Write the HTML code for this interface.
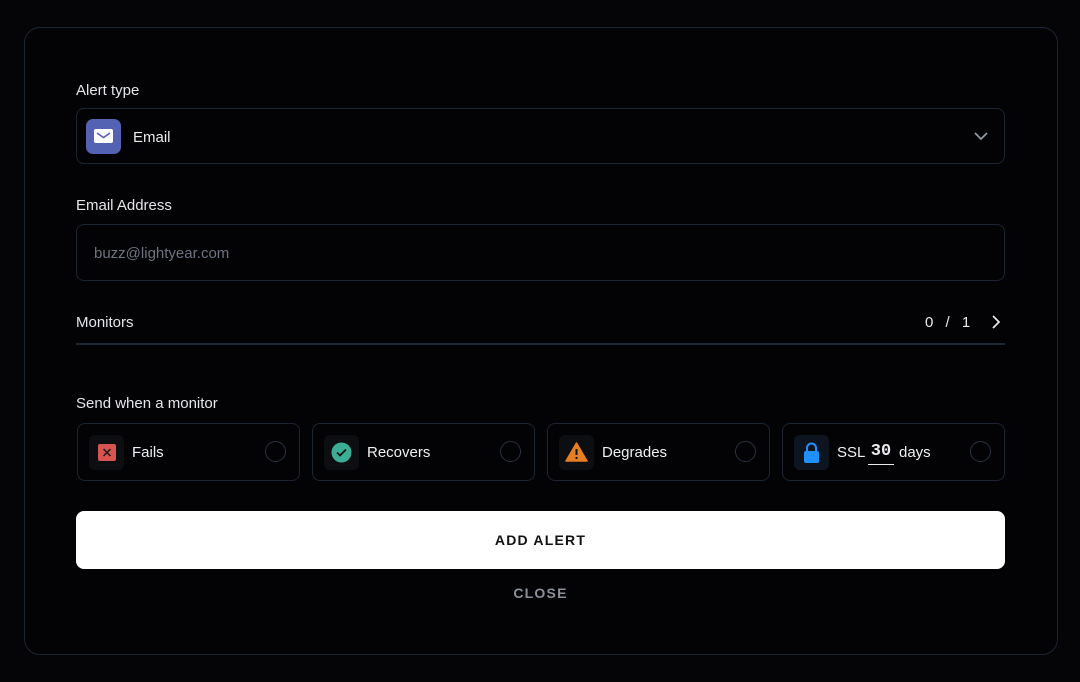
<!DOCTYPE html>
<html><head><style>
*{box-sizing:border-box;margin:0;padding:0}
body{width:1080px;height:682px;background:#050507;font-family:"Liberation Sans",sans-serif;color:#e8eaee;position:relative;overflow:hidden}
.panel{position:absolute;left:24px;top:27px;width:1034px;height:628px;border:1px solid #1c2433;border-radius:16px;background:#030305}
.lbl{position:absolute;left:76px;font-size:15px;color:#e4e6ea}
.box{position:absolute;left:76px;width:929px;border:1px solid #1c2433;border-radius:8px}
.card{position:absolute;top:423px;width:223px;height:58px;border:1px solid #1c2433;border-radius:8px}
.ic{position:absolute;left:11px;top:11px;width:35px;height:35px;border-radius:6px;background:#0c0e12}
.ct{position:absolute;left:54px;top:20px;font-size:15px;color:#eef0f2}
.rad{position:absolute;right:13px;top:17px;width:21px;height:21px;border:1px solid #2a3140;border-radius:50%}
</style></head><body>
<div class="panel"></div>
<div class="lbl" style="top:82px">Alert type</div>
<div class="box" style="top:108px;height:56px">
 <div style="position:absolute;left:9px;top:10px;width:35px;height:35px;border-radius:7px;background:#5462b4">
  <svg width="35" height="35" viewBox="0 0 35 35"><rect x="8" y="10" width="19" height="14" rx="2" fill="#fff"/><path d="M11 14l6.5 4.5L24 14" stroke="#5462b4" stroke-width="1.6" fill="none"/></svg>
 </div>
 <div style="position:absolute;left:56px;top:20px;font-size:15px">Email</div>
 <svg style="position:absolute;right:16px;top:21px" width="14" height="12" viewBox="0 0 14 12"><path d="M1 3l6 6 6-6" stroke="#9aa0aa" stroke-width="1.6" fill="none"/></svg>
</div>
<div class="lbl" style="top:197px">Email Address</div>
<div class="box" style="top:224px;height:57px"><div style="position:absolute;left:17px;top:20px;font-size:15px;color:#6e7380">buzz@lightyear.com</div></div>
<div class="lbl" style="top:314px">Monitors</div>
<div style="position:absolute;left:925px;top:314px;font-size:15px;word-spacing:8px">0 / 1</div>
<svg style="position:absolute;left:990px;top:315px" width="12" height="14" viewBox="0 0 12 14"><path d="M3 1l6 6-6 6" stroke="#e8eaee" stroke-width="1.7" fill="none"/></svg>
<div style="position:absolute;left:76px;top:343px;width:929px;height:2px;background:#1f2735"></div>
<div class="lbl" style="top:395px">Send when a monitor</div>
<div class="card" style="left:77px"><div class="ic"><div style="position:absolute;left:9px;top:9px;width:18px;height:17px;border-radius:2px;background:#d9534f"></div><svg style="position:absolute;left:9px;top:9px" width="18" height="17"><path d="M5.5 5l7 7M12.5 5l-7 7" stroke="#1a1a1a" stroke-width="1.5"/></svg></div><div class="ct">Fails</div><div class="rad"></div></div>
<div class="card" style="left:312px"><div class="ic"><svg style="position:absolute;left:7px;top:7px" width="21" height="21"><circle cx="10.5" cy="10.5" r="10" fill="#3cae96"/><path d="M6 10.5l3 3 6-6" stroke="#111" stroke-width="1.8" fill="none"/></svg></div><div class="ct">Recovers</div><div class="rad"></div></div>
<div class="card" style="left:547px"><div class="ic"><svg style="position:absolute;left:6px;top:6px" width="23" height="22"><path d="M11.5 2L22 20H1z" fill="#e67e22" stroke="#e67e22" stroke-linejoin="round" stroke-width="1.5"/><path d="M11.5 8v6" stroke="#111" stroke-width="2"/><circle cx="11.5" cy="17" r="1.1" fill="#111"/></svg></div><div class="ct">Degrades</div><div class="rad"></div></div>
<div class="card" style="left:782px"><div class="ic" style="background:#0f1520"><svg style="position:absolute;left:8px;top:6px" width="19" height="23"><path d="M5 11V7a4.5 4.5 0 019 0v4" stroke="#1e90ff" stroke-width="2" fill="none"/><rect x="2" y="10" width="15" height="12" rx="2" fill="#1e90ff"/></svg></div>
 <div class="ct">SSL</div>
 <div style="position:absolute;left:85px;top:17px;width:26px;height:24px;border-bottom:1px solid #e8eaee;font-family:'Liberation Mono',monospace;font-weight:bold;font-size:17px;text-align:center;line-height:22px">30</div>
 <div class="ct" style="left:116px">days</div><div class="rad"></div></div>
<div style="position:absolute;left:76px;top:511px;width:929px;height:58px;background:#fff;border-radius:8px;color:#111;font-weight:bold;font-size:14px;letter-spacing:1.2px;text-align:center;line-height:58px">ADD ALERT</div>
<div style="position:absolute;left:76px;top:585px;width:929px;text-align:center;font-size:14px;font-weight:bold;letter-spacing:1.2px;color:#8a8f98">CLOSE</div>
</body></html>
